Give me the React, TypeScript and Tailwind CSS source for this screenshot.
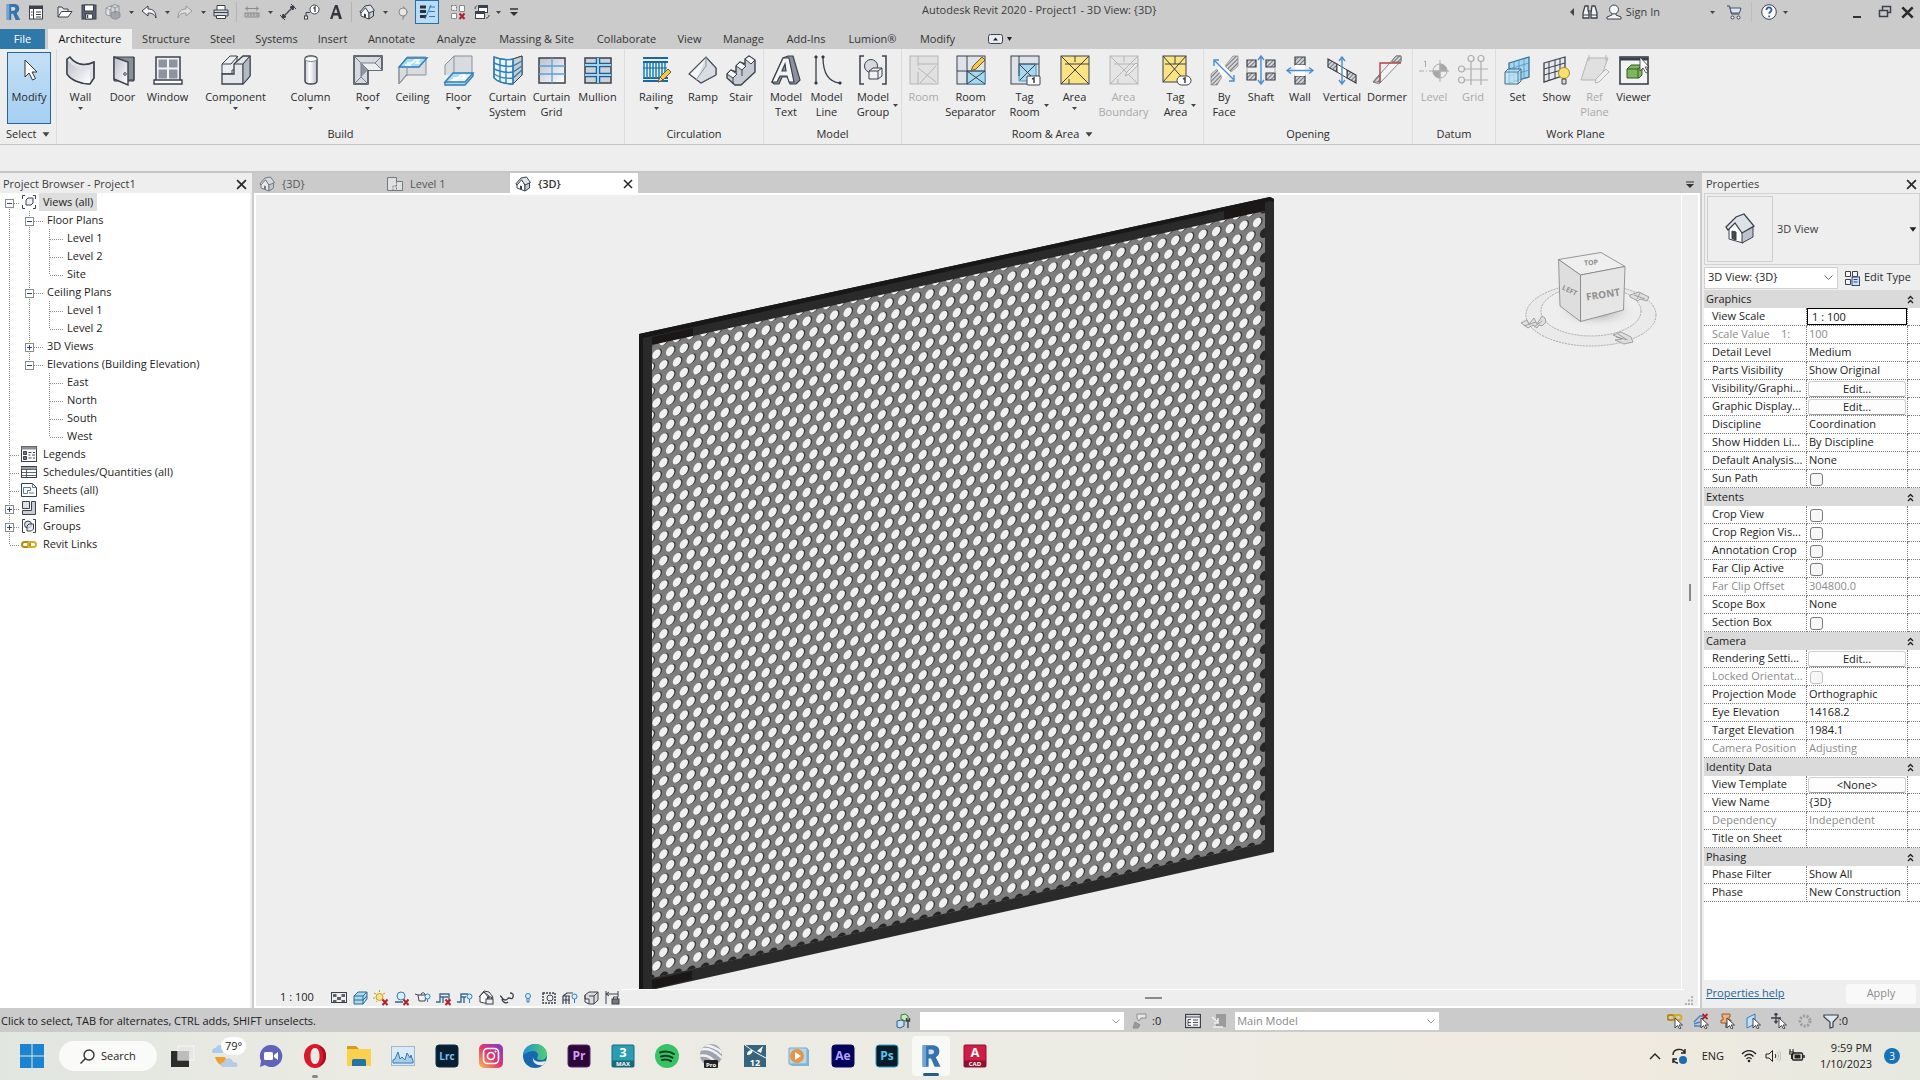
import React from "react";

type Kids = { children?: React.ReactNode };
const K = "#3b404c";
const B = "#2f7fb8";

function Ico({ s = 16, children }: Kids & { s?: number }) {
  return (
    <svg width={s} height={s} viewBox={`0 0 ${s} ${s}`} fill="none" stroke={K} strokeWidth="1" className="block shrink-0" aria-hidden="true">
      {children}
    </svg>
  );
}

function Caret({ dark }: { dark?: boolean }) {
  return (
    <svg width="8" height="5" viewBox="0 0 7 4" className="block shrink-0" aria-hidden="true">
      <path d="M0.500 0h6L3.500 4z" fill={dark ? "#222" : "#444"} />
    </svg>
  );
}

function Cross({ s = 11, w = 1.6 }: { s?: number; w?: number }) {
  return (
    <svg width={s} height={s} viewBox="0 0 10 10" className="block shrink-0" aria-hidden="true">
      <path d="M1 1l8 8M9 1l-8 8" stroke="#2b2b2b" strokeWidth={w} />
    </svg>
  );
}

/* ---------- quick access toolbar ---------- */

const redX = <path d="M9.500 9.500l5 5.500M14.500 9.500l-5 5.500" stroke="#b3202a" strokeWidth="2" />;

const house16 = (
  <>
    <path d="M2 7.500l4-4.500 4 5.500V15l-8-3z" fill="#fdfdfd" />
    <path d="M10 8l4.500-2v6L10 15z" fill="#c3c8d1" />
    <path d="M0.800 8L6 2l5.500-1 4 5.500L10 9 6.500 3.800 2 9z" fill="#dfe3ea" />
    <path d="M5 9.500v3.500l2 .8v-3.500z" fill={K} stroke="none" />
  </>
);

const qat: Record<string, React.ReactNode> = {
  list: (
    <>
      <rect x="1.500" y="2" width="13" height="13" fill="#fff" />
      <path d="M1.500 3.500h13" strokeWidth="3" />
      <path d="M5.500 5v10M8 8h5M8 10.500h5M8 13h5M3 8h1.500M3 11h1.500" />
    </>
  ),
  open: (
    <>
      <path d="M1 13V3h4l1.500 2H11v2.500" fill="#e8eaee" />
      <path d="M1 13l3.500-5.500H15L11 13z" fill="#fff" />
    </>
  ),
  save: (
    <>
      <rect x="1" y="1" width="14" height="14" fill="#596071" />
      <rect x="3.500" y="1" width="9" height="6" fill="#fff" />
      <rect x="4.500" y="10" width="7" height="5" fill="#fff" />
      <path d="M6.500 11v3" strokeWidth="1.500" />
    </>
  ),
  sync: (
    <g stroke="#85888f" strokeWidth="0.800">
      <path d="M1 4l4-2 3 1.500v7L5 12 1 10.500z" fill="#e4e5e8" />
      <path d="M6 2l4-1.500L14 2v7l-4 2-4-2z" fill="#d3d5d9" />
      <path d="M6 9l4.500-2L15 9v4l-4.500 2.500L6 13.500z" fill="#a3a6ad" />
      <path d="M6 2l4 2 4-2M10 4v6M1 4l4 2 1-.5M5 6v6" />
    </g>
  ),
  undo: <path d="M1 7l6-5v3c5 0 8 2.500 8 9-1.500-4-4-5-8-5v3z" fill="#f5f5f5" />,
  redo: <path d="M15 7L9 2v3C4 5 1 7.500 1 14c1.500-4 4-5 8-5v3z" fill="#ddd" stroke="#9a9a9a" />,
  print: (
    <>
      <path d="M4 6V1.500h8V6" fill="#fff" />
      <path d="M1 6h14v6H1z" fill="#cfd2d8" />
      <path d="M1 8.500h14" />
      <path d="M3.500 11.500h9v3h-9z" fill="#fff" />
    </>
  ),
  measure: (
    <g stroke="#8b8b8b">
      <path d="M2 4.500h12M4 2.500l-2.500 2L4 6.500M12 2.500l2.500 2-2.500 2" />
      <rect x="1" y="9" width="14" height="4" fill="#bdbdbd" />
      <path d="M4 9v3M7 9v3M10 9v3M13 9v3" />
    </g>
  ),
  dim: (
    <>
      <path d="M4 12l8-8" strokeWidth="1.300" />
      <path d="M2 14l1-4 3 3zM14 2l-1 4-3-3z" fill={K} />
      <path d="M0 11l5 5M11 0l5 5" />
    </>
  ),
  tag: (
    <>
      <circle cx="10.500" cy="5.500" r="4.500" fill="#fff" />
      <path d="M6 8.500H2v5" />
      <rect x="0.500" y="12" width="3" height="3" fill="#fff" />
      <path d="M9.500 4.500l1.500-1.500v5" strokeWidth="1.300" />
    </>
  ),
  text: (
    <path fillRule="evenodd" d="M2 15L7 1h2.500l4.500 14h-3l-1-3.500H5.500L4.500 15zM6 9h3.500L8 4z" fill="#33363d" stroke="none" />
  ),
  home: house16,
  section: (
    <g stroke="#8b8b8b">
      <path d="M8 1.500L13.500 8H8zM8 14.500L13.500 8H8z" fill="#9c9c9c" stroke="none" />
      <circle cx="8" cy="8" r="4" fill="#e6e6e6" />
      <path d="M8 12v4" />
    </g>
  ),
  thin: (
    <>
      <path d="M1 3h6M1 7.500h6M1 12.500h6" stroke="#2b2f3a" strokeWidth="3" />
      <path d="M10 3h6M10 7.500h6M10 12.500h6" stroke={B} />
      <path d="M6 15l6-14" stroke={B} />
    </>
  ),
  closeHidden: (
    <>
      <path d="M1.500 1.500h5v5h-5z" fill="#eee" stroke="#777" strokeDasharray="2 1" />
      <path d="M9.500 1.500h5v6h-5zM1.500 9.500h5v5h-5z" fill="#fff" stroke="#8a8a8a" />
      {redX}
    </>
  ),
  swap: (
    <>
      <rect x="4.500" y="1.500" width="9" height="7" fill="#fff" />
      <path d="M4.500 3h9" strokeWidth="2" />
      <rect x="1.500" y="7.500" width="9" height="7" fill="#fff" />
      <path d="M1.500 9h9" strokeWidth="2" />
      <path d="M12 14c2 0 3-1 3-3M1 5c0-2 1-3 2-3" />
    </>
  ),
};

function QBtn({ k, cls = "w-6" }: { k: string; cls?: string }) {
  return (
    <button aria-label={k} className={`flex h-6 shrink-0 items-center justify-center ${cls}`}>
      <Ico>{qat[k]}</Ico>
    </button>
  );
}

function QArrow({ cls = "w-3" }: { cls?: string }) {
  return (
    <button aria-label="More options" className={`flex h-6 shrink-0 items-center justify-center ${cls}`}>
      <svg width="5" height="3" viewBox="0 0 5 3"><path d="M0 0h5L2.500 3z" fill="#444" /></svg>
    </button>
  );
}

function RevitR({ s = 18 }: { s?: number }) {
  return (
    <svg width={s} height={s} viewBox="0 0 18 20" aria-hidden="true">
      <path d="M2 1h8c4 0 6 2 6 5 0 2.500-1.200 4-3 5l4 8h-5l-3-7H7v7H2z" fill="#3473ad" />
      <path d="M2 1h3v18H2z" fill="#6fa5d2" />
      <path d="M7 4.500h2.500c1.500 0 2 .8 2 2s-.7 2-2 2H7z" fill="#d5dde6" />
    </svg>
  );
}

function TitleBar() {
  return (
    <header className="flex h-[29px] shrink-0 items-start bg-[#cbcbcb]">
      <div className="flex w-[640px] shrink-0 items-center pl-px">
        <button aria-label="Revit" className="flex h-6 w-6 items-center justify-center"><RevitR /></button>
        <QBtn k="list" cls="w-[22px] mr-1.5" />
        <QBtn k="open" /><QBtn k="save" /><QBtn k="sync" /><QArrow />
        <QBtn k="undo" /><QArrow /><QBtn k="redo" /><QArrow /><QBtn k="print" />
        <span className="mx-[3px] h-5 w-px bg-[#b4b4b4]" />
        <QBtn k="measure" /><QArrow /><QBtn k="dim" /><QBtn k="tag" /><QBtn k="text" />
        <span className="mx-[3px] h-5 w-px bg-[#b4b4b4]" />
        <QBtn k="home" /><QArrow /><QBtn k="section" />
        <QBtn k="thin" cls="w-6 border border-[#2a6ea3] bg-[#b9dbf5] mr-[7px]" />
        <QBtn k="closeHidden" /><QBtn k="swap" /><QArrow cls="w-2" />
        <button aria-label="Customize toolbar" className="flex h-6 w-6 items-center justify-center">
          <svg width="8" height="8" viewBox="0 0 8 8"><path d="M0 1h8" stroke="#333" strokeWidth="1.500" /><path d="M0 4h8L4 8z" fill="#333" /></svg>
        </button>
      </div>
      <h1 className="ml-[282px] pt-0.5 text-[11px] leading-4 whitespace-nowrap text-[#3c3c3c]">Autodesk Revit 2020 - Project1 - 3D View: {"{3D}"}</h1>
      <div className="ml-auto flex h-6 shrink-0 items-center pr-1.5">
        <button aria-label="Collapse search" className="mr-2"><svg width="4" height="8" viewBox="0 0 4 8"><path d="M4 0v8L0 4z" fill="#444" /></svg></button>
        <button aria-label="Search" className="mr-2">
          <Ico>
            <path d="M3 2h3v4l1 3v5H1V9zM10 2h3l2 7v5H9V9z" fill="#f3f3f3" strokeWidth="1.300" />
            <path d="M7 7h2M1 11h6M9 11h6" />
          </Ico>
        </button>
        <button className="flex items-center gap-1 text-[11px] text-[#3c3c3c]">
          <Ico>
            <path d="M6 9.500v1.500l-5 2v2h14v-2l-5-2V9.500" fill="#f5f6f8" />
            <circle cx="8" cy="5.500" r="4.500" fill="#f5f6f8" />
          </Ico>
          <span>Sign In</span>
        </button>
        <span className="ml-[46px]"><QArrow /></span>
        <button aria-label="App store" className="ml-2">
          <Ico>
            <path d="M1 2h2.500l2 8h8" />
            <path d="M4 4h11l-1.500 5H5.500z" fill="#dfe6f2" stroke="#3f5478" />
            <circle cx="6.500" cy="13.500" r="1.500" fill="#fff" /><circle cx="12.500" cy="13.500" r="1.500" fill="#fff" />
          </Ico>
        </button>
        <span className="mx-[9px] h-5 w-px bg-[#bcbcbc]" />
        <button aria-label="Help">
          <Ico>
            <circle cx="8" cy="8" r="7.300" fill="#fff" />
            <path d="M5.500 6c0-3.500 5-3.500 5 0 0 1.800-2.300 1.800-2.300 3.800M8.200 11.500v1.800" stroke="#2a5cae" strokeWidth="1.800" />
          </Ico>
        </button>
        <QArrow cls="w-4" />
        <button aria-label="Minimize" className="ml-[60px] flex h-4 w-3 items-end pb-0.5"><span className="block h-0.5 w-2 bg-[#333]" /></button>
        <button aria-label="Restore" className="ml-3">
          <Ico>
            <path d="M5.500 6V2.500h8v6H11" strokeWidth="1.500" />
            <path d="M2.500 6.500h8v6h-8z" strokeWidth="1.500" />
          </Ico>
        </button>
        <button aria-label="Close" className="ml-2"><Cross s={13} w={2} /></button>
      </div>
    </header>
  );
}

/* ---------- ribbon tabs ---------- */

const tabs: [string, string][] = [
  ["Structure", "w-[68px]"], ["Steel", "w-[45px]"], ["Systems", "w-[63px]"], ["Insert", "w-[49px]"],
  ["Annotate", "w-[69px]"], ["Analyze", "w-[61px]"], ["Massing & Site", "w-[99px]"], ["Collaborate", "w-[81px]"],
  ["View", "w-[45px]"], ["Manage", "w-[63px]"], ["Add-Ins", "w-[62px]"], ["Lumion®", "w-[71px]"], ["Modify", "w-[59px]"],
];

function TabRow() {
  return (
    <nav className="flex h-5 shrink-0 bg-[#cbcbcb] text-[11px] text-[#333]">
      <button className="w-[45px] bg-[#2f78aa] text-white">File</button>
      <button className="ml-[3px] w-[84px] bg-[#efefef] text-[#111]">Architecture</button>
      {tabs.map(([t, w]) => (
        <button key={t} className={`${w} whitespace-nowrap`}>{t}</button>
      ))}
      <button aria-label="Minimize ribbon" className="ml-[21px] flex items-center gap-1">
        <svg width="15" height="10" viewBox="0 0 15 10"><rect x="0.500" y="0.500" width="14" height="9" rx="2" fill="#e7eaee" stroke={K} /><path d="M5 6.500h5L7.500 3.500z" fill="#222" /></svg>
        <svg width="5" height="4" viewBox="0 0 5 4"><path d="M0 0h5L2.500 4z" fill="#222" /></svg>
      </button>
    </nav>
  );
}

/* ---------- ribbon icons, drawn on a 32 unit grid ---------- */

const pencil = (
  <>
    <path d="M18 28l2-5 8-8 3 3-8 8z" fill="#f5c94a" stroke="#6a5a2c" />
    <path d="M18 28l2-5 3 3z" fill="#f7e3c0" stroke="#6a5a2c" />
  </>
);
const hatch = (
  <pattern id="hatch" width="3" height="3" patternUnits="userSpaceOnUse" patternTransform="rotate(45)">
    <rect width="3" height="3" fill="#d3d5d9" /><path d="M0 0v3" stroke="#50545e" strokeWidth="1.500" />
  </pattern>
);
const roomFrame = (fill: string, st: string) => (
  <g stroke={st}>
    <rect x="2" y="2" width="28" height="28" fill={fill} />
  </g>
);
const areaX = (st: string) => <path d="M2 2l28 28M30 2L2 30M16 2v6M6 10h24M10 30v-5" stroke={st} />;

const art: Record<string, React.ReactNode> = {
  wall: (
    <>
      <path d="M2 5l3-2c5 7 14 10 24 5v16l-4 6C15 30 6 26 2 20z" fill="#dfe2e7" stroke={K} />
      <path d="M2 5c5 8 12 10 23 10v15C15 30 6 26 2 20z" fill="url(#face)" stroke="none" />
      <path d="M2 5l3-2c5 7 14 10 24 5v16l-4 6C15 30 6 26 2 20z" strokeWidth="1.500" />
    </>
  ),
  door: (
    <>
      <path d="M7 3h20v24H7z" fill="#8a9098" />
      <path d="M7 3l14 5v23L7 25z" fill="url(#face)" strokeWidth="1.400" />
      <path d="M21 26h6V3" /><circle cx="18" cy="20" r="1.300" fill="#fff" />
    </>
  ),
  window: (
    <>
      <rect x="4" y="3" width="24" height="24" fill="#f2f3f5" strokeWidth="1.500" />
      <rect x="6.500" y="5.500" width="19" height="19" fill="#8e949f" stroke="none" />
      <path d="M16 5v20M6 14.500h20" stroke="#f2f3f5" strokeWidth="2" />
      <path d="M2 26h28v4H2z" fill="#fff" strokeWidth="1.400" />
    </>
  ),
  component: (
    <>
      <path d="M2 10l8-8h7v14h-5v4H2z" fill="#eceef1" />
      <path d="M2 20h12V10l9-8h7v20l-7 8H2z" fill="#e4e7eb" strokeWidth="1.300" />
      <path d="M14 10h9v20M23 10l7-8M2 10h9l7-8" />
      <path d="M23 10l7-8v20l-7 8z" fill="#b4b9c2" />
    </>
  ),
  column: (
    <>
      <path d="M10 5c0-4 12-4 12 0v22c0 4-12 4-12 0z" fill="url(#cyl)" strokeWidth="1.400" />
      <ellipse cx="16" cy="5" rx="6" ry="2.500" fill="#fff" stroke="#888" />
    </>
  ),
  roof: (
    <>
      <path d="M2 2h28v14H16v14H2z" fill="#d6d9df" strokeWidth="1.500" />
      <path d="M2 2l14 14L9 23V9z" fill="#8d93a0" stroke="none" />
      <path d="M9 9h14l7 7H16z" fill="#eceef2" stroke="none" />
      <path d="M2 2l7 7h14l7-7M9 9v14l-7 7M9 23l7 7M23 9l7 7M9 9l7 7" stroke="#777e8c" />
    </>
  ),
  ceiling: (
    <>
      <path d="M2 14l8-11h19v18H9l-7 9z" fill="#d9dbdf" stroke="#8b8f98" />
      <path d="M10 14v8M2 14v16l8-9" stroke="#8b8f98" />
      <path d="M2 13l8-9h20l-8 9z" fill="#a9dbf2" stroke={B} strokeWidth="1.400" />
      <path d="M10 9h5l3-3h4l-3 3h4M8 11h6" stroke="#fff" strokeWidth="1.500" />
    </>
  ),
  floor: (
    <>
      <path d="M2 21V11l9-9h18v17" fill="#d9dbdf" stroke="#8b8f98" />
      <path d="M11 2v17" stroke="#8b8f98" />
      <path d="M2 28l8-9h20l-8 9zM2 28v3h20l8-9v-3" fill="#a9dbf2" stroke={B} strokeWidth="1.400" />
      <path d="M10 24h5l3-3h4l-3 3h4M8 26h6" stroke="#fff" strokeWidth="1.500" />
    </>
  ),
  csys: (
    <>
      <path d="M2 3c8 3 16 3 19 2l9-3v19l-9 9C14 30 6 28 2 24z" fill="#eaf4fb" stroke={K} />
      <path d="M21 5l9-3v19l-9 9z" fill="#c9ccd3" stroke={K} />
      <path d="M2 9c7 3 14 4 19 3l9-5M2 15c7 3 14 4 19 3l9-6M2 20c7 4 14 5 19 4l9-8M8 5v22M14 6v23" stroke={B} strokeWidth="1.400" />
      <path d="M2 3c8 3 16 3 19 2v25C14 30 6 28 2 24z" stroke={B} strokeWidth="1.400" />
    </>
  ),
  cgrid: (
    <>
      <rect x="3" y="4" width="26" height="25" fill="url(#face)" strokeWidth="1.500" />
      <path d="M3 12h26M3 20h26M16 4v25" stroke="#5ba3d6" strokeWidth="1.300" />
    </>
  ),
  mullion: (
    <>
      <rect x="3" y="4" width="26" height="25" fill="#cdd2da" strokeWidth="1.500" />
      <path d="M3 11h26M3 21h26M16 4v25" stroke="#1f5f8f" strokeWidth="4.500" />
      <path d="M3 11h26M3 21h26M16 4v25" stroke="#9ed4f2" strokeWidth="2" />
    </>
  ),
  railing: (
    <>
      <path d="M3 4h25M3 8h25M3 24h25M3 27h25" stroke="#1b679f" strokeWidth="1.800" />
      <path d="M4 9v15M7 9v15M10 9v15M13 9v15M16 9v15M19 9v15M22 9v15M25 9v15" stroke="#2f8cc8" strokeWidth="1.700" />
      <path d="M3 14h24" stroke="#1b679f" />{pencil}
    </>
  ),
  ramp: (
    <>
      <path d="M2 20L19 3l10 11v7l-15 8z" fill="#f4f5f7" />
      <path d="M19 3l10 11v7l-15 8-3-5z" fill="#c7ccd4" stroke="none" opacity="0.600" />
      <path d="M2 20L19 3l10 11v7l-15 8z" stroke="#4c5260" strokeWidth="1.200" />
      <path d="M19 3v9L9 26" stroke="#8c929e" />
    </>
  ),
  stair: (
    <>
      <path d="M2 20l4-4 5 2v-6l4-4 5 2V5l4-3 6 4v12L16 31h-6l-8-7z" fill="#c6cad2" strokeWidth="1.400" />
      <path d="M2 20l4-4 6 4-4 4zM11 12l4-4 6 4-4 4zM20 5l4-3 6 4-4 4z" fill="#f6f7f8" />
      <path d="M8 24v6M17 16v6" />
    </>
  ),
  mtext: (
    <>
      <path d="M2 28L13 4l5-2h5l7 24-4 4h-6l-2-7h-6l-3 7H4z" fill="#8c929d" strokeWidth="1.200" />
      <path fillRule="evenodd" d="M2 28L13 4h6l5 24h-5l-2-6h-7l-3 6zM12 17h4l-1-7z" fill="#f4f5f7" strokeWidth="1.200" />
    </>
  ),
  mline: (
    <>
      <path d="M5 3v26M12 3c0 15 5 25 17 26" strokeWidth="1.300" />
      <path d="M4 2h2v2H4zM4 28h2v2H4zM11 2h2v2h-2zM28 28h2v2h-2z" fill="#222" />
    </>
  ),
  mgroup: (
    <>
      <path d="M7 2H3v28h4M25 2h4v28h-4" strokeWidth="1.500" />
      <circle cx="14" cy="12" r="6.500" fill="#d6dae0" />
      <path d="M12 17l4-3h9v8l-4 3h-9z" fill="#eef0f3" /><path d="M12 17h9v8M21 17l4-3" />
    </>
  ),
  room: (
    <>
      {roomFrame("#e1e1e1", "#b5b5b5")}
      <path d="M10 2v10M10 10h20M10 18v12M10 14l18 14M28 12L12 29" stroke="#b5b5b5" />
    </>
  ),
  roomsep: (
    <>
      {roomFrame("#dfe3e9", K)}
      <path d="M12 17h18v13H12z" fill="#a8d8ee" stroke="#4a97c4" />
      <path d="M12 2v28M2 17h28M12 17l18 13M30 17L12 30" />
      <path d="M16 17l2-5L27 3l3 3-9 9z" fill="#f5c94a" stroke="#6a5a2c" />
    </>
  ),
  tagroom: (
    <>
      {roomFrame("#dfe3e9", K)}
      <path d="M10 10h17v17H10z" fill="#a8d8ee" stroke="#4a97c4" />
      <path d="M10 2v20M10 10h20M11 11l15 15M26 11L11 26" />
      <rect x="18" y="22" width="13" height="9" rx="1" fill="#fff" /><path d="M23 25l2-1v5" strokeWidth="1.500" />
    </>
  ),
  area: <>{roomFrame("#fbe381", K)}{areaX(K)}</>,
  areab: (
    <>
      {roomFrame("#e4e4e4", "#b5b5b5")}{areaX("#b5b5b5")}
      <path d="M17 22l2-4 9-9 2 2-9 9z" fill="#eee" stroke="#b0b0b0" />
    </>
  ),
  tagarea: (
    <>
      <rect x="3" y="2" width="23" height="26" fill="#fbe381" />
      <path d="M3 2l23 26M26 2L3 28M15 2v8M5 10h21" />
      <rect x="17" y="22" width="14" height="9" rx="4.500" fill="#fff" /><path d="M23 25l2-1v5" strokeWidth="1.500" />
    </>
  ),
  byface: (
    <>
      <path d="M3 20l6-5 6 6-6 10H3z" fill="url(#hatch)" stroke="#777" strokeWidth="0.600" /><path d="M17 12l8-10h5v10l-7 6z" fill="url(#hatch)" stroke="#777" strokeWidth="0.600" />
      <path d="M9 15l5-6 8 9-6 7z" fill="#fff" stroke="none" />
      <path d="M6 6l20 20M6 12V6h5M21 27h5v-6" stroke="#4a8fcf" strokeWidth="1.400" />
    </>
  ),
  shaft: (
    <>
      <path d="M2 6h9v7H2zM21 6h9v7h-9zM2 19h9v7H2zM21 19h9v7h-9z" fill="url(#hatch)" strokeWidth="1.200" />
      <path d="M16 2v28M13 6l3-4 3 4M13 26l3 4 3-4" stroke="#4a8fcf" strokeWidth="1.400" />
      <path d="M2 13v6M30 13v6" stroke="#aaa" />
    </>
  ),
  wallopen: (
    <>
      <path d="M11 3h10v8H11zM11 22h10v8H11z" fill="url(#hatch)" strokeWidth="1.200" />
      <path d="M11 11v11h10V11z" fill="#fff" stroke="none" />
      <path d="M3 16.500h26M7 13.500l-4 3 4 3M25 13.500l4 3-4 3" stroke="#4a8fcf" strokeWidth="1.400" />
    </>
  ),
  vertical: (
    <>
      <path d="M2 5l9 5v8l-9-5zM21 16l9 5v8l-9-5z" fill="url(#hatch)" strokeWidth="1.200" />
      <path d="M11 10l10 6v8l-10-6z" fill="#fff" />
      <path d="M16 3v27M13 7l3-4 3 4M13 26l3 4 3-4" stroke="#4a8fcf" strokeWidth="1.400" />
    </>
  ),
  dormer: (
    <>
      <path d="M2 28L25 2h5v5L8 30z" fill="#f4f4f4" stroke="#8a8a8a" />
      <path d="M21 7l4-5h5v6h-9zM2 28l7-8v8z" fill="url(#hatch)" stroke="#777" />
      <path d="M30 9H9v20" stroke="#b0464a" strokeWidth="1.400" />
    </>
  ),
  level: (
    <g stroke="#adadad">
      <path d="M1 17h15" strokeDasharray="5 2 1 2" /><path d="M6 8l1.500-1v6" />
      <circle cx="22" cy="17" r="7" fill="#ececec" />
      <path d="M22 10v7h7a7 7 0 00-7-7zM22 17v7a7 7 0 01-7-7z" fill="#a6a6a6" /><path d="M22 6v22M16 17h15" />
    </g>
  ),
  grid: (
    <g stroke="#adadad" strokeWidth="1.200">
      <path d="M14 7v24M24 7v24M7 15h24M7 26h24" />
      <circle cx="14" cy="4.500" r="3" /><circle cx="24" cy="4.500" r="3" /><circle cx="4.500" cy="15" r="3" /><circle cx="4.500" cy="26" r="3" />
    </g>
  ),
  set: (
    <>
      <path d="M7 9l20-6v20L7 29z" fill="#a5d5ee" stroke="#33729c" strokeWidth="1.300" />
      <path d="M12 8v19M17 6v20M22 5v20M7 15l20-6M7 22l20-6" stroke="#4b93bf" strokeWidth="0.800" />
      <path d="M3 18l3-3h13v12l-3 3H3z" fill="#bfe4f6" fillOpacity="0.750" stroke="#3c6a86" />
      <path d="M3 18h13v12M16 18l3-3" stroke="#3c6a86" strokeWidth="0.800" />
    </>
  ),
  show: (
    <>
      <path d="M3 9l21-6v18L3 28z" fill="#e6e8ec" strokeWidth="1.300" />
      <path d="M8 8v18M14 6v19M19 5v18M3 15l21-6M3 21l21-6" />
      <circle cx="23" cy="19" r="5.500" fill="#fbe06b" stroke="#a58a2a" /><path d="M21 25h4v5h-4z" fill="#d9d9d9" />
    </>
  ),
  refplane: (
    <g stroke="#b5b5b5">
      <path d="M9 4h20l-8 22H2z" fill="#e0e0e0" /><path d="M10 1v6M27 1v6" />
      <path d="M16 29l1-4 10-10 3 3-10 10z" fill="#efefef" />
    </g>
  ),
  viewer: (
    <>
      <rect x="2" y="3" width="28" height="27" fill="#f3f3f3" strokeWidth="1.600" />
      <path d="M2 5h28" strokeWidth="3" />
      <path d="M9 15l4-4h11v10l-3 3H9z" fill="#7fb85c" stroke="#38562a" /><path d="M9 15h11v9M20 15l4-4" stroke="#38562a" />
      <path d="M22 3v14l3-3 3 5 2-1-3-5h4z" fill="#fff" stroke="#333" strokeWidth="0.800" />
    </>
  ),
};

type Btn = { k: string; l: string; w: string; l2?: string; a?: boolean; off?: boolean };
type Panel = { t: string; cls: string; more?: boolean; b: Btn[] };

const panels: Panel[] = [
  {
    t: "Build", cls: "w-[568px]", b: [
      { k: "wall", l: "Wall", w: "w-11", a: true }, { k: "door", l: "Door", w: "w-10" }, { k: "window", l: "Window", w: "w-[50px]" },
      { k: "component", l: "Component", w: "w-[86px]", a: true }, { k: "column", l: "Column", w: "w-16", a: true },
      { k: "roof", l: "Roof", w: "w-[50px]", a: true }, { k: "ceiling", l: "Ceiling", w: "w-10" }, { k: "floor", l: "Floor", w: "w-[52px]", a: true },
      { k: "csys", l: "Curtain", l2: "System", w: "w-[46px]" }, { k: "cgrid", l: "Curtain", l2: "Grid", w: "w-[42px]" }, { k: "mullion", l: "Mullion", w: "w-[50px]" },
    ],
  },
  { t: "Circulation", cls: "w-[139px]", b: [{ k: "railing", l: "Railing", w: "w-12", a: true }, { k: "ramp", l: "Ramp", w: "w-[46px]" }, { k: "stair", l: "Stair", w: "w-[30px]" }] },
  { t: "Model", cls: "w-[138px]", b: [{ k: "mtext", l: "Model", l2: "Text", w: "w-[42px]" }, { k: "mline", l: "Model", l2: "Line", w: "w-[39px]" }, { k: "mgroup", l: "Model", l2: "Group", w: "w-[54px]", a: true }] },
  {
    t: "Room & Area", cls: "w-[302px]", more: true, b: [
      { k: "room", l: "Room", w: "w-10", off: true }, { k: "roomsep", l: "Room", l2: "Separator", w: "w-[54px]" },
      { k: "tagroom", l: "Tag", l2: "Room", w: "w-[54px]", a: true }, { k: "area", l: "Area", w: "w-[46px]", a: true },
      { k: "areab", l: "Area", l2: "Boundary", w: "w-[52px]", off: true }, { k: "tagarea", l: "Tag", l2: "Area", w: "w-[52px]", a: true },
    ],
  },
  {
    t: "Opening", cls: "w-[209px]", b: [
      { k: "byface", l: "By", l2: "Face", w: "w-[38px]" }, { k: "shaft", l: "Shaft", w: "w-9" }, { k: "wallopen", l: "Wall", w: "w-[42px]" },
      { k: "vertical", l: "Vertical", w: "w-[42px]" }, { k: "dormer", l: "Dormer", w: "w-12" },
    ],
  },
  { t: "Datum", cls: "w-[83px]", b: [{ k: "level", l: "Level", w: "w-[38px]", off: true }, { k: "grid", l: "Grid", w: "w-10", off: true }] },
  {
    t: "Work Plane", cls: "w-[159px] border-r-0", b: [
      { k: "set", l: "Set", w: "w-10" }, { k: "show", l: "Show", w: "w-[38px]" }, { k: "refplane", l: "Ref", l2: "Plane", w: "w-[38px]", off: true }, { k: "viewer", l: "Viewer", w: "w-10" },
    ],
  },
];

function RibbonButton({ b }: { b: Btn }) {
  return (
    <button className={`flex shrink-0 flex-col items-center pt-[5px] text-[11px] leading-[15px] whitespace-nowrap ${b.w} ${b.off ? "text-[#a9a9a9]" : "text-[#2b2b2b]"}`}>
      <Ico s={32}>{art[b.k]}</Ico>
      <span className="mt-[3px] block">{b.l}</span>
      {b.l2 ? (
        <span className="relative block">
          {b.l2}
          {b.a && <span className="absolute top-0 left-full ml-1"><svg width="5" height="3" viewBox="0 0 5 3"><path d="M0 0h5L2.500 3z" fill="#444" /></svg></span>}
        </span>
      ) : (
        b.a && <span className="mt-[3px] block"><svg width="5" height="3" viewBox="0 0 5 3" className="block"><path d="M0 0h5L2.500 3z" fill="#444" /></svg></span>
      )}
    </button>
  );
}

function Ribbon() {
  return (
    <section className="flex h-24 shrink-0 border-b border-[#c4c4c4] bg-[#eeeeee] text-[11px] text-[#2b2b2b]">
      <svg width="0" height="0" className="absolute" aria-hidden="true">
        <defs>
          <linearGradient id="face" x1="0" y1="0" x2="1" y2="1"><stop offset="0" stopColor="#b9bec8" /><stop offset="1" stopColor="#ffffff" /></linearGradient>
          <linearGradient id="cyl"><stop offset="0" stopColor="#c3c7cf" /><stop offset="0.400" stopColor="#fff" /><stop offset="1" stopColor="#b5bac4" /></linearGradient>
          {hatch}
        </defs>
      </svg>
      <div className="flex w-[57px] shrink-0 flex-col border-r border-[#dcdcdc]">
        <div className="flex h-[75px] pt-[3px] pl-[7px]">
          <button className="flex w-11 flex-col items-center border border-[#2a6496] bg-[linear-gradient(#c3dff5,#a5cff2)] pt-px leading-[15px]">
            <svg width="32" height="32" viewBox="0 0 32 32" className="block"><path d="M12 6v17l4-4 3.500 7 3-1.500-3.500-6.500h5z" fill="#fff" stroke="#333" /></svg>
            <span className="mt-[3px] block">Modify</span>
          </button>
        </div>
        <button className="flex h-5 items-center gap-1.5 pl-1.5">Select <Caret /></button>
      </div>
      {panels.map((p) => (
        <div key={p.t} className={`flex shrink-0 flex-col border-r border-[#dcdcdc] ${p.cls}`}>
          <div className="flex h-[75px] justify-center">{p.b.map((b) => <RibbonButton key={b.k} b={b} />)}</div>
          <div className="flex h-5 items-center justify-center gap-1.5">{p.t}{p.more && <Caret />}</div>
        </div>
      ))}
    </section>
  );
}

/* ---------- project browser ---------- */

const treeArt: Record<string, React.ReactNode> = {
  views: (<><path d="M4 1.500H1.500V5M12 1.500h2.500V5M4 14.500H1.500V11M12 14.500h2.500V11" /><path d="M5 6l2-2h5v5l-2 2H5z" fill="#f1f2f4" /></>),
  legends: (<><rect x="0.500" y="0.500" width="15" height="15" fill="#fff" /><path d="M0.500 2h15" stroke="#8b909a" strokeWidth="3" /><path d="M2.500 5.500h3v3h-3zM2.500 10.500h3v3h-3z" fill="#777" /><path d="M7.500 6.500h3M12 6.500h2M7.500 9h2M11 9h3M7.500 12h3M12 12h2" /></>),
  sched: (<><rect x="0.500" y="2.500" width="15" height="11" fill="#fff" /><path d="M0.500 4h15" stroke="#9a9fa9" strokeWidth="2" /><path d="M0.500 5.500h15M0.500 8.500h15M0.500 11.500h15M5.500 5v9" strokeWidth="0.800" /></>),
  sheets: (<><path d="M0.500 1.500h11l4 4v9h-15z" fill="#fff" /><path d="M11.500 1.500v4h4M2.500 5.500h7v3h-3v3h-4zM8 11h5" stroke="#5c7ca0" /></>),
  families: (<><path d="M1.500 1.500h7v7h-7z" fill="#dfe2e7" /><path d="M10.500 1.500h4v13h-13v-4h9z" fill="#c9ced6" /></>),
  groups: (<><path d="M4 1.500H1.500v13H4M12 1.500h2.500v13H12" /><circle cx="7" cy="6.500" r="3.500" fill="#cfe0ea" /><path d="M6 8l2-2h4.500v5l-2 2H6z" fill="#dfe6ec" fillOpacity="0.700" /></>),
  links: (<><rect x="1" y="6" width="8" height="5" rx="2.500" stroke="#b58a10" strokeWidth="2" /><rect x="7" y="6" width="8" height="5" rx="2.500" stroke="#d8ad25" strokeWidth="2" /></>),
};

type Cell = "v" | "t" | "l" | "-" | "+" | "-top" | "-end" | " ";

function Guide({ c, first }: { c: Cell; first?: boolean }) {
  const box = c.startsWith("-") || c.startsWith("+");
  const up = !(c === "-top" || c === " ");
  const down = !(c === "l" || c === "-end" || c === " ");
  return (
    <svg width="20" height="18" viewBox="0 0 20 18" className="block shrink-0 overflow-visible" aria-hidden="true">
      <g stroke="#8c8c8c" strokeDasharray="1 1" fill="none">
        {up && <path d="M9.500 0v10" />}
        {down && <path d="M9.500 10v8" />}
        {c !== "v" && c !== " " && <path d={first ? "M10 10.500h9" : "M10 10.500h14"} />}
      </g>
      {box && (
        <>
          <rect x="5.500" y="6.500" width="8" height="8" fill="#fff" stroke="#8c8c8c" />
          <path d="M7 10.500h5" stroke="#2c4a8a" />
          {c.startsWith("+") && <path d="M9.500 8v5" stroke="#2c4a8a" />}
        </>
      )}
    </svg>
  );
}

const tree: { t: string; g: Cell[]; ic?: string; sel?: boolean }[] = [
  { t: "Views (all)", g: ["-top"], ic: "views", sel: true },
  { t: "Floor Plans", g: ["v", "-"] },
  { t: "Level 1", g: ["v", "v", "t"] }, { t: "Level 2", g: ["v", "v", "t"] }, { t: "Site", g: ["v", "v", "l"] },
  { t: "Ceiling Plans", g: ["v", "-"] },
  { t: "Level 1", g: ["v", "v", "t"] }, { t: "Level 2", g: ["v", "v", "l"] },
  { t: "3D Views", g: ["v", "+"] },
  { t: "Elevations (Building Elevation)", g: ["v", "-end"] },
  { t: "East", g: ["v", " ", "t"] }, { t: "North", g: ["v", " ", "t"] }, { t: "South", g: ["v", " ", "t"] }, { t: "West", g: ["v", " ", "l"] },
  { t: "Legends", g: ["t"], ic: "legends" }, { t: "Schedules/Quantities (all)", g: ["t"], ic: "sched" }, { t: "Sheets (all)", g: ["t"], ic: "sheets" },
  { t: "Families", g: ["+"], ic: "families" }, { t: "Groups", g: ["+"], ic: "groups" }, { t: "Revit Links", g: ["l"], ic: "links" },
];

function ProjectBrowser() {
  return (
    <aside className="flex w-[252px] shrink-0 flex-col border-r-2 border-[#eeeeee] bg-white text-[11px] text-[#1c1c1c]">
      <div className="flex h-5 shrink-0 items-center justify-between bg-[#eeeeee] pt-0.5 pr-[3px] pl-[3px]">
        <h2 className="text-[#3c3c3c]">Project Browser - Project1</h2>
        <button aria-label="Close project browser"><Cross /></button>
      </div>
      <ul>
        {tree.map((r, i) => (
          <li key={i} className="flex h-[18px] items-center whitespace-nowrap">
            {r.g.map((c, j) => <Guide key={j} c={c} first={j === 0} />)}
            {r.ic && <span className="ml-px flex"><Ico>{treeArt[r.ic]}</Ico></span>}
            <span className={`leading-[18px] ${r.ic ? "ml-0.5 px-1" : "ml-[7px]"} ${r.sel ? "bg-[#dedede]" : ""}`}>{r.t}</span>
          </li>
        ))}
      </ul>
    </aside>
  );
}

/* ---------- 3D view ---------- */

const TILT = -55;

function holePath(dark: boolean, dx: number, major: number, minor: number) {
  const cx = major * Math.cos((TILT * Math.PI) / 180);
  const cy = major * Math.sin((TILT * Math.PI) / 180);
  const f = (n: number) => n.toFixed(2);
  let d = "";
  for (let j = -1; j <= 26; j++) {
    for (let h = 0; h < 2; h++) {
      for (let i = -1; i <= 45; i++) {
        const u = 13.65 * (i + h / 2) + dx;
        const v = 24.47 * (j + h / 2);
        const edge = j + h / 2 >= 25.5 || i + h / 2 >= 44.5;
        if (edge !== dark) continue;
        const arc = `${major} ${minor} ${TILT} 1 0`;
        d += `M${f(u - cx)} ${f(v - cy)}a${arc} ${f(2 * cx)} ${f(2 * cy)}a${arc} ${f(-2 * cx)} ${f(-2 * cy)}`;
      }
    }
  }
  return d;
}
const holeShade = holePath(false, 1, 5.1, 4);
const holeLight = holePath(false, -0.2, 4.9, 3.8);
const holeEdge = holePath(true, 0.3, 5, 4.3);
const lattice = "matrix(1 -0.21927 0 1 656.7 354)";

function Model() {
  return (
    <svg viewBox="256 195 1425 794" className="block h-full w-full" aria-label="Perforated panel">
      <defs><clipPath id="sheet"><path d="M652 345L1265 211V843L652 978z" /></clipPath></defs>
      <path d="M639 334L1270 197L1274 199V852L656 989H639z" fill="#2a2a2a" />
      <path d="M639 334L1270 197L1274 199V202L1270 201L643 338V989H639z" fill="#171717" />
      <path d="M652 337L693 328V337L652 346zM652 980L692 971V979L656 988H652z" fill="#1b1717" />
      <path d="M1224 210L1265 201V211L1224 220z" fill="#1b1717" />
      <path d="M652 345L1265 211V843L652 978z" fill="#7d7d7d" />
      <g clipPath="url(#sheet)">
        <g transform={lattice}>
          <path d={holeShade} fill="#3a3a3a" />
          <path d={holeLight} fill="#f0f0f0" />
          <path d={holeEdge} fill="#262626" />
        </g>
      </g>
    </svg>
  );
}

function ViewCube() {
  return (
    <svg width="142" height="100" viewBox="1518 250 142 100" className="absolute top-[55px] right-[21px]" aria-label="View cube" fontFamily="'Open Sans', sans-serif" fontWeight="700">
      <defs><radialGradient id="glow"><stop offset="0" stopColor="#777" stopOpacity="0.800" /><stop offset="1" stopColor="#eee" stopOpacity="0" /></radialGradient></defs>
      <ellipse cx="1591" cy="315" rx="65" ry="31" fill="#eaeaea" stroke="#a8a8a8" strokeDasharray="2 1" />
      <ellipse cx="1591" cy="311" rx="50" ry="25" fill="#eeeeee" stroke="#a8a8a8" strokeDasharray="2 1" />
      <ellipse cx="1596" cy="311" rx="42" ry="17" fill="url(#glow)" />
      <path d="M1558.500 259.500L1601 252.500L1625 266.500L1580.500 275z" fill="#efefef" stroke="#808080" strokeWidth="0.800" />
      <path d="M1558.500 259.500L1580.500 275V321.500L1560 306z" fill="#dedede" stroke="#808080" strokeWidth="0.800" />
      <path d="M1580.500 275L1625 266.500L1623.500 310L1580.500 321.500z" fill="#e6e6e6" stroke="#808080" strokeWidth="0.800" />
      <g fill="#8f8f8f" textAnchor="middle">
        <text x="1603" y="298" fontSize="10" transform="rotate(-9 1603 294)">FRONT</text>
        <text x="1570" y="293" fontSize="7" transform="rotate(26 1570 290)">LEFT</text>
        <text x="1591" y="265" fontSize="7" transform="rotate(-4 1591 262)">TOP</text>
      </g>
      <g fill="#dedede" stroke="#8f8f8f" strokeWidth="0.800">
        <path d="M1521 323l6-3 2 4 5-6 3 6 5-8 3 2 1 4-4 4-3-1-2 3-4-3-5 3z" />
        <path d="M1524 326l12-4M1534 327l8-6" />
        <path d="M1613 335l8-3 10 5 2 5-9 2-9-4 7-1z" /><path d="M1616 337l12 3M1618 334l8 5" />
        <path d="M1630 295l9-3 10 5-2 4-7-2-2 2-8-4z" /><path d="M1634 295l11 4M1640 293l-3 6" />
      </g>
    </svg>
  );
}

const blueBulb = <circle cx="12.500" cy="6.500" r="2.500" fill="#d9effb" stroke={B} />;
const vcb: [string, React.ReactNode][] = [
  ["Detail level", <><rect x="0.500" y="2.500" width="15" height="10" fill="#eee" /><path d="M2 4h3.500v3H2zM6 7h4v3H6zM10.500 4H14v3h-3.500zM2 10h3.500v2H2zM10.500 10H14v2h-3.500z" fill="#5c606a" stroke="none" /></>],
  ["Visual style", <><path d="M2 6l4-4h9v7l-4 5H2z" fill="#a9dbf2" stroke="#2d6a8c" /><path d="M2 6h9v8M11 6l4-4M2 10h9l4-4" stroke="#2d6a8c" /></>],
  ["Sun path", <><circle cx="6.500" cy="7" r="3.500" fill="#fbe58a" stroke="#d29a1c" /><path d="M6.500 0v2M1 3l2 1M12 3l-2 1M0 8h2M3 12l1-1" stroke="#d29a1c" />{redX}</>],
  ["Shadows", <><circle cx="7" cy="6" r="4" fill="#d9effb" stroke={B} /><path d="M1 12h8" strokeWidth="2" stroke="#5b86a8" />{redX}</>],
  ["Rendering", <><path d="M0 4l3 1 1 6h6l1-6H3M6 5c0-3 4-3 4 0" fill="#f1f1f1" />{blueBulb}<path d="M12.500 9v3" stroke={B} /></>],
  ["Crop view", <><path d="M0 12h4V4h9v7M4 7h8M7 7v6" strokeWidth="1.400" stroke="#3c6a8e" />{redX}</>],
  ["Show crop region", <><path d="M0 12h4V4h7M4 7h5M7 7v6" strokeWidth="1.400" stroke="#3c6a8e" />{blueBulb}<path d="M12.500 9v4" stroke={B} /></>],
  ["Lock 3D view", <><path d="M2 12V6l4-4 5 4v7H6z" fill="#fff" /><path d="M1 7l5-6 5 1 4 5-1 2" /><path d="M6 2l5 6" /><rect x="8" y="9" width="7" height="5" fill="#eee" /><path d="M9.500 9V7h4v2" /></>],
  ["Temporary hide", <path d="M1 6c2 0 2 4 5 4s2-2 4-2 3 2 4-1-1-4-3-4M3 9c0 3 4 5 6 3" strokeWidth="1.300" />],
  ["Reveal hidden", <><circle cx="8" cy="6" r="2.500" fill="#d9effb" stroke={B} /><path d="M7 8.500V12h2V8.500" stroke={B} /></>],
  ["Worksharing", <><path d="M2 3h12v10H2z" strokeDasharray="2 1" strokeWidth="1.500" /><circle cx="9" cy="8" r="3" fill="#eee" /></>],
  ["View properties", <><path d="M1 6l4-3h6M1 6v8M4 6v8M7 6v8M1 6h7M1 10h7" strokeWidth="1.200" />{blueBulb}<path d="M12.500 9v4" stroke={B} /></>],
  ["Analytical model", <><path d="M2 5l4-3h9v8l-4 4H6V9H2z" fill="#dcdcdc" /><path d="M6 6h5v8M11 6l4-4M2 5v7l4 2" /></>],
  ["Constraints", <><path d="M2 1v13M14 1v6M2 4h12M5 2L2 4l3 2" /><rect x="8" y="9" width="7" height="5" fill="#777" /><path d="M9.500 9V7h4v2" /></>],
];

function ViewTab({ title, plan, active }: { title: string; plan?: boolean; active?: boolean }) {
  return (
    <div className={`flex w-32 shrink-0 items-center pt-0.5 pr-[5px] pl-[5px] ${active ? "bg-white font-semibold text-[#333]" : "text-[#555]"}`}>
      <button className="flex items-center gap-[7px]">
        <span className={active ? "" : "opacity-60"}>
          <Ico>{plan ? <><path d="M0.500 1.500h9v4h6v9h-15z" fill="#eee" /><path d="M9.500 5.500v9M6 14.500V10h3" strokeDasharray="2 1" /></> : house16}</Ico>
        </span>
        {title}
      </button>
      {active && <button aria-label="Close view" className="ml-auto"><Cross s={10} /></button>}
    </div>
  );
}

function Viewport() {
  return (
    <main className="flex min-w-0 flex-1 flex-col text-[11px]">
      <div className="flex h-5 shrink-0 items-stretch bg-[#cbcbcb]">
        <ViewTab title="{3D}" /><ViewTab title="Level 1" plan /><ViewTab title="{3D}" active />
        <button aria-label="Tab list" className="mt-0.5 mr-1.5 ml-auto flex items-center">
          <svg width="8" height="7" viewBox="0 0 8 7"><path d="M0 1h8" stroke="#333" /><path d="M0 3h8L4 7z" fill="#333" /></svg>
        </button>
      </div>
      <div className="flex min-h-0 flex-1 flex-col border-2 border-white bg-[#eeeeee]">
        <div className="flex min-h-0 flex-1">
          <div className="relative min-w-0 flex-1 overflow-hidden border-r border-white"><Model /><ViewCube /></div>
          <div className="flex w-4 shrink-0 items-center justify-center"><span className="h-[17px] w-0.5 bg-[#8a8a8a]" /></div>
        </div>
        <div className="flex h-[17px] shrink-0">
          <div className="flex w-[366px] shrink-0 items-center">
            <span className="w-[76px] pl-6 whitespace-nowrap text-[#222]">1 : 100</span>
            {vcb.map(([n, a]) => <button key={n} aria-label={n} className="flex w-[21px] shrink-0 justify-center"><Ico>{a}</Ico></button>)}
          </div>
          <div className="flex flex-1 items-center justify-center border-t border-white"><span className="h-0.5 w-[17px] bg-[#8a8a8a]" /></div>
          <svg width="10" height="10" viewBox="0 0 10 10" className="mr-1 self-end"><path d="M7 0h2v2H7zM4 3.500h2v2H4zM7 3.500h2v2H7zM1 7h2v2H1zM4 7h2v2H4zM7 7h2v2H7z" fill="#b5b5b5" /></svg>
        </div>
      </div>
    </main>
  );
}

/* ---------- properties ---------- */

type Row = { n: string; v?: string; kind?: "btn" | "chk" | "sel"; off?: boolean };
const groups: { t: string; rows: Row[] }[] = [
  {
    t: "Graphics", rows: [
      { n: "View Scale", v: "1 : 100", kind: "sel" }, { n: "Scale Value    1:", v: "100", off: true }, { n: "Detail Level", v: "Medium" },
      { n: "Parts Visibility", v: "Show Original" }, { n: "Visibility/Graphi...", v: "Edit...", kind: "btn" }, { n: "Graphic Display...", v: "Edit...", kind: "btn" },
      { n: "Discipline", v: "Coordination" }, { n: "Show Hidden Li...", v: "By Discipline" }, { n: "Default Analysis...", v: "None" }, { n: "Sun Path", kind: "chk" },
    ],
  },
  {
    t: "Extents", rows: [
      { n: "Crop View", kind: "chk" }, { n: "Crop Region Vis...", kind: "chk" }, { n: "Annotation Crop", kind: "chk" }, { n: "Far Clip Active", kind: "chk" },
      { n: "Far Clip Offset", v: "304800.0", off: true }, { n: "Scope Box", v: "None" }, { n: "Section Box", kind: "chk" },
    ],
  },
  {
    t: "Camera", rows: [
      { n: "Rendering Setti...", v: "Edit...", kind: "btn" }, { n: "Locked Orientat...", kind: "chk", off: true }, { n: "Projection Mode", v: "Orthographic" },
      { n: "Eye Elevation", v: "14168.2" }, { n: "Target Elevation", v: "1984.1" }, { n: "Camera Position", v: "Adjusting", off: true },
    ],
  },
  {
    t: "Identity Data", rows: [
      { n: "View Template", v: "<None>", kind: "btn" }, { n: "View Name", v: "{3D}" }, { n: "Dependency", v: "Independent", off: true }, { n: "Title on Sheet" },
    ],
  },
  { t: "Phasing", rows: [{ n: "Phase Filter", v: "Show All" }, { n: "Phase", v: "New Construction" }] },
];

function PropValue({ r, id }: { r: Row; id: string }) {
  if (r.kind === "btn") return <button aria-labelledby={id} className="mt-px ml-px block h-4 w-[98px] rounded-[3px] border border-[#cfcfcf] border-b-[#9f9f9f] bg-[#fdfdfd] text-center leading-[14px]">{r.v}</button>;
  if (r.kind === "chk") return <input type="checkbox" aria-labelledby={id} disabled={r.off} className={`mt-[3px] ml-[3px] block h-[13px] w-[13px] appearance-none rounded-[3px] border bg-[#f7f7f7] ${r.off ? "border-[#c4c4c4]" : "border-[#7a7a7a]"}`} />;
  if (r.kind === "sel") return <select aria-labelledby={id} className="block h-[17px] w-full appearance-none border border-black bg-white pl-1 leading-[15px]"><option>{r.v}</option></select>;
  return <span className="block pl-0.5 whitespace-nowrap">{r.v}</span>;
}

function Properties() {
  return (
    <aside className="flex w-[218px] shrink-0 flex-col border-l-2 border-[#eeeeee] bg-[#eeeeee] text-[11px] text-[#1c1c1c]">
      <div className="flex h-5 shrink-0 items-center justify-between pt-0.5 pr-[3px] pl-0.5">
        <h2 className="text-[#3c3c3c]">Properties</h2>
        <button aria-label="Close properties"><Cross /></button>
      </div>
      <button className="flex h-[72px] shrink-0 items-center border border-[#d2d2d2] pl-0.5 text-[#3c3c3c]">
        <span className="flex h-[66px] w-[66px] items-center justify-center border border-[#cfcfcf]">
          <Ico s={32}>
            <path d="M5 15l7-7 7 11v11L5 26z" fill="#fff" />
            <path d="M18 19l11-5v10l-11 6z" fill="#bcc3d0" />
            <path d="M2 14L12 4l8-3 10 12-12 7-7-10-7 7z" fill="#dce1ea" strokeWidth="1.300" />
            <path d="M8 18l4 1v8l-4-1.500z" fill="#454a55" />
          </Ico>
        </span>
        <span className="ml-1">3D View</span>
        <span className="mr-0.5 ml-auto"><Caret dark /></span>
      </button>
      <div className="flex h-[25px] shrink-0 items-center">
        <div className="relative flex h-[22px] w-[134px] items-center border border-[#d0d0d0] bg-white">
          <select aria-label="Type selector" className="h-full w-full appearance-none pl-[3px]"><option>3D View: {"{3D}"}</option></select>
          <svg width="9" height="5" viewBox="0 0 9 5" className="pointer-events-none absolute right-1"><path d="M0.500 0.500l4 4 4-4" fill="none" stroke="#666" /></svg>
        </div>
        <button className="ml-1.5 flex items-center gap-1 whitespace-nowrap text-[#2b2b2b]">
          <Ico><path d="M1.500 1.500h5v5h-5zM8.500 1.500h5v5h-5zM1.500 9.500h5v5h-5z" fill="#f5f5f5" /><rect x="8" y="7" width="7.500" height="8.500" fill="#cfe0f2" stroke="#2c4a7a" /><path d="M9.500 9.500h4M9.500 12h4" stroke="#2c4a7a" /></Ico>
          Edit Type
        </button>
      </div>
      <div className="min-h-0 flex-1 bg-white">
        <table className="w-full table-fixed border-separate border-spacing-0 leading-[16px]">
          <colgroup><col className="w-[103px]" /><col className="w-[101px]" /><col /></colgroup>
          {groups.map((g) => (
            <tbody key={g.t}>
              <tr>
                <th colSpan={3} className="h-[18px] bg-[#dadada] p-0 text-left font-normal">
                  <div className="flex items-center justify-between pr-1.5 pl-0.5">{g.t}
                    <svg width="7" height="9" viewBox="0 0 7 9" aria-hidden="true"><path d="M1 4l2.500-2.500L6 4M1 8l2.500-2.500L6 8" fill="none" stroke="#222" strokeWidth="1.400" /></svg>
                  </div>
                </th>
              </tr>
              {g.rows.map((r) => {
                const id = r.n.replace(/\W+/g, "-");
                return (
                  <tr key={r.n} className={r.off ? "text-[#8c8c8c]" : ""}>
                    <td id={id} className="h-[18px] overflow-hidden border-r border-b border-dotted border-[#7a7a7a] p-0 pl-2 align-top whitespace-pre">{r.n}</td>
                    <td className="h-[18px] border-r border-b border-dotted border-[#7a7a7a] p-0 align-top"><PropValue r={r} id={id} /></td>
                    <td className="h-[18px] border-b border-dotted border-[#7a7a7a] p-0" />
                  </tr>
                );
              })}
            </tbody>
          ))}
        </table>
      </div>
      <div className="flex h-7 shrink-0 items-center justify-between pr-1 pb-px pl-0.5">
        <a href="#help" className="text-[#23649c] underline">Properties help</a>
        <button disabled className="h-5 w-[70px] rounded-[3px] bg-[#f9f9f9] text-[#8c8c8c]">Apply</button>
      </div>
    </aside>
  );
}

/* ---------- status bar ---------- */

const cur = <path d="M8 5v10l2.500-2.500 2 3.500 1.500-1-2-3h3.500z" fill="#fff" stroke="#333" strokeWidth="0.900" />;
const statusIcons: [string, React.ReactNode][] = [
  ["Select links", <><rect x="0.500" y="2" width="7" height="5" rx="2.500" stroke="#b58a10" strokeWidth="2" /><rect x="7.500" y="2" width="7" height="5" rx="2.500" stroke="#d8ad25" strokeWidth="2" />{cur}</>],
  ["Select underlay", <><path d="M1 9l6-6h5M1 13h7M1 11l6-2" stroke="#3f86c2" strokeWidth="1.400" /><path d="M9.500 1l5 5M14.500 1l-5 5" stroke="#b3202a" strokeWidth="1.800" />{cur}</>],
  ["Select pinned", <><path d="M3 1h8v3h-1v3h2v3H2V7h2V4H3z" fill="#eeb27e" stroke="#a05a22" /><path d="M7 10v5" />{cur}</>],
  ["Select by face", <><path d="M2 5l8-4v10l-8 4z" fill="#bfe0f5" stroke={B} />{cur}</>],
  ["Drag elements", <><path d="M5 0v10M0 5h10M3.500 2L5 0l1.500 2M3.500 8L5 10l1.500-2" strokeWidth="1.300" />{cur}</>],
  ["Background processes", <circle cx="8" cy="8" r="5" stroke="#9c9c9c" strokeWidth="3" strokeDasharray="2 1.500" />],
];

function StatusSelect({ label, value }: { label: string; value: string }) {
  return (
    <div className="relative flex h-[18px] w-[204px] items-center bg-white">
      <select aria-label={label} className="h-full w-full appearance-none pl-0.5 text-[#888]"><option>{value}</option></select>
      <svg width="8" height="5" viewBox="0 0 8 5" className="pointer-events-none absolute right-1"><path d="M0.500 0.500l3.500 3.500 3.500-3.500" fill="none" stroke="#999" /></svg>
    </div>
  );
}

function StatusBar() {
  return (
    <footer className="flex h-6 shrink-0 items-center bg-[#cbcbcb] pt-0.5 text-[11px] whitespace-nowrap text-[#1c1c1c]">
      <p className="w-[896px] pl-px">Click to select, TAB for alternates, CTRL adds, SHIFT unselects.</p>
      <button aria-label="Worksets"><Ico><path d="M5 2l4-1 3 2v4l-3 1-4-2z" fill="#cdebb0" stroke="#3c7a3c" /><path d="M1 8l4-1 3 1v5l-4 2-3-1z" fill="#bfe0f5" stroke="#2d5f86" /><path d="M12 7v8M10.500 5v3h3V5" strokeWidth="1.300" /></Ico></button>
      <div className="ml-2"><StatusSelect label="Active workset" value="" /></div>
      <button className="ml-2 flex items-center gap-1"><Ico><path d="M5 1h9v4H9l-2 3-2-3z" fill="#e6e6e6" stroke="#8e8e8e" /><path d="M1 15l2-6 5 3-2 3z" fill="#9a9a9a" stroke="#8e8e8e" /></Ico>:0</button>
      <button aria-label="Design options" className="ml-6"><Ico><rect x="0.500" y="1.500" width="15" height="13" fill="#f4f4f4" strokeWidth="1.300" /><path d="M0.500 4h15" /><path d="M3 6.500h3M3 6.500v6M3 9.500h3M3 12.500h3M8 7h5M8 9.500h5M8 12h5" strokeWidth="0.900" /></Ico></button>
      <button aria-label="Add to set" className="ml-2.5"><Ico><rect x="5" y="1" width="10" height="13" fill="#9b9b9b" stroke="none" /><path d="M1 4l6 5M7 5v5H3M2 14h10" stroke="#f2f2f2" strokeWidth="1.500" /></Ico></button>
      <div className="ml-2"><StatusSelect label="Design option" value="Main Model" /></div>
      <div className="mr-[72px] ml-auto flex items-center gap-2.5">
        {statusIcons.map(([n, a]) => <button key={n} aria-label={n}><Ico>{a}</Ico></button>)}
        <button className="flex items-center"><Ico><path d="M1 2h14v2l-5 5v5l-3 1V9L1 4z" fill="#dfe8ef" strokeWidth="1.200" /></Ico><span>:0</span></button>
      </div>
    </footer>
  );
}

/* ---------- taskbar ---------- */

function Tile({ bg, fg, border, text, sub }: { bg: string; fg: string; border: string; text: string; sub?: string }) {
  return (
    <svg width="24" height="24" viewBox="0 0 24 24" fontFamily="'Open Sans', sans-serif" fontWeight="700" textAnchor="middle">
      <rect x="1" y="1" width="22" height="22" rx={sub ? 1 : 3} fill={bg} stroke={border} />
      {sub && <path d="M1 16.500h22V23H1z" fill={border} />}
      <text x="12" y={sub ? 13 : 16} fontSize={sub ? 13 : text.length > 2 ? 10 : 12} fill={fg}>{text}</text>
      {sub && <text x="12" y="22" fontSize="6" fill="#fff">{sub}</text>}
    </svg>
  );
}

function App24({ children }: Kids) {
  return <svg width="24" height="24" viewBox="0 0 24 24" fill="none" aria-hidden="true">{children}</svg>;
}

const apps: { n: string; el: React.ReactNode; dot?: boolean; on?: boolean }[] = [
  { n: "Task view", el: <App24><rect x="0" y="7" width="18" height="16" fill="#2c2c2c" /><rect x="7" y="2" width="16" height="14" fill="#e6e6e6" stroke="#f8f8f8" /><path d="M7 7h11v9H7z" fill="#bdbdbd" /></App24> },
  {
    n: "Weather", el: (
      <div className="relative h-[34px] w-8">
        <svg width="32" height="34" viewBox="0 0 32 34"><path d="M1 13c0-4 3-4 4-4 1-4 6-4 7 0v5H2z" fill="#a9cdf0" /><path d="M4 18c3 11 16 13 22 6-8 0-10-2-12-6z" fill="#f0a02c" /><path d="M12 28c-3 0-3-5 1-5 1-5 8-5 9 0 5-1 6 5 2 5z" fill="#b9cbe4" /></svg>
        <span className="absolute -top-0.5 left-2.5 rounded-full bg-white px-1 text-[11px] leading-[18px] text-[#222]">79°</span>
      </div>
    ),
  },
  { n: "Chat", el: <App24><path d="M12 1a11 11 0 11-6 20l-5 2 1-6A11 11 0 0112 1z" fill="#6163b8" /><rect x="5" y="8" width="9" height="8" rx="1.500" fill="#fff" /><path d="M15 11l4-3v8l-4-3z" fill="#fff" /></App24> },
  { n: "Opera", dot: true, el: <App24><path fillRule="evenodd" d="M12 0a11 12 0 100 24 11 12 0 000-24zm0 4c3 0 4.500 3.500 4.500 8S15 20 12 20s-4.500-3.500-4.500-8S9 4 12 4z" fill="#d8192c" /><path d="M16 3c6 3 6 15 0 18 4 1 7-4 7-9s-3-10-7-9z" fill="#a50f1f" /></App24> },
  { n: "File Explorer", el: <App24><path d="M0 2h9l3 3H0z" fill="#d79b1e" /><path d="M0 5h24v17H0z" fill="#fbd04e" /><path d="M5 22v-5c0-1.500 1-2 2-2h10c1 0 2 .5 2 2v5z" fill="#2273a8" /></App24> },
  { n: "Performance", el: <App24><rect x="0.500" y="2.500" width="23" height="19" fill="#dbeaf6" stroke="#9fb9cd" /><path d="M2 19v-3l2-1 3-7 2 7 2-2 3 3 2-7 3 5 1-3 2 6v2z" fill="#a9cfe8" stroke="#2d7cb8" /></App24> },
  { n: "Lightroom", el: <Tile bg="#071f33" fg="#7cc0ef" border="#0c2b44" text="Lrc" /> },
  { n: "Instagram", el: <App24><defs><linearGradient id="ig" x1="0" y1="1" x2="1" y2="0"><stop offset="0" stopColor="#fdc04c" /><stop offset="0.500" stopColor="#e0356f" /><stop offset="1" stopColor="#7b3bd0" /></linearGradient></defs><rect width="24" height="24" rx="5" fill="url(#ig)" /><rect x="4.500" y="4.500" width="15" height="15" rx="4" stroke="#fff" strokeWidth="1.600" /><circle cx="12" cy="12" r="3.500" stroke="#fff" strokeWidth="1.600" /><circle cx="16.500" cy="7.500" r="1" fill="#fff" /></App24> },
  { n: "Edge", el: <App24><defs><linearGradient id="edge" x1="0" y1="0" x2="1" y2="0"><stop offset="0" stopColor="#1c93d2" /><stop offset="1" stopColor="#52cf6e" /></linearGradient></defs><circle cx="12" cy="12" r="12" fill="#1667ae" /><path d="M0 11C1 4 6 0 12 0c7 0 12 5 12 10 0 4-3 6-6 6s-4-1-4-2c0-.8 1-1 1-3 0-2-2-4-5-4-5 0-9 4-10 4z" fill="url(#edge)" /><path d="M10 13c0 4 5 6 13 4-1 2-2 3-3 4-6 1-11-2-10-8z" fill="#ebebe5" /></App24> },
  { n: "Premiere", el: <Tile bg="#2b0638" fg="#d79bf5" border="#5b2470" text="Pr" /> },
  { n: "3ds Max", el: <Tile bg="#2b9db3" fg="#fff" border="#19697c" text="3" sub="MAX" /> },
  { n: "Spotify", el: <App24><circle cx="12" cy="12" r="12" fill="#35c365" /><path d="M5 8.500c5-1.500 10-1 14 1.500M6 12.500c4-1.200 8-.8 11.500 1.200M7 16c3-1 6-.5 9 1" stroke="#143c22" strokeWidth="2" strokeLinecap="round" /></App24> },
  { n: "Earth Pro", el: <App24><defs><clipPath id="globe"><circle cx="12" cy="11" r="11" /></clipPath></defs><circle cx="12" cy="11" r="11" fill="#9ea3b0" /><g clipPath="url(#globe)"><path d="M0 6c9-3 16 1 24 9M3 1c8 0 15 3 20 8M0 12c7-2 12 1 18 8" stroke="#f1f1f3" strokeWidth="2.500" /></g><rect x="5" y="16" width="14" height="8" rx="1" fill="#222" /><text x="12" y="22.500" fontSize="6" fill="#fff" textAnchor="middle" fontFamily="'Open Sans', sans-serif" fontWeight="700">Pro</text></App24> },
  { n: "Lumion 12", el: <App24><rect x="1" y="1" width="22" height="22" fill="#35647c" /><path d="M2 1c6 5 13 9 21 13" stroke="#fff" /><path d="M4 11c0-4 3-5 6-5-1 4-3 5-6 5zM14 7l6-5-2 7z" fill="#fff" /><text x="12" y="21.500" fontSize="9" fill="#fff" textAnchor="middle" fontFamily="'Open Sans', sans-serif" fontWeight="700">12</text></App24> },
  { n: "Media Player", el: <App24><path d="M2 4h18v16H2z" fill="#b5d8ee" stroke="#79a9c8" /><path d="M20 4l2 2v16H5l-3-2h18z" fill="#7fb4d4" /><circle cx="10" cy="12" r="7" fill="#e4954a" /><path d="M8 8l6 4-6 4z" fill="#fff" /></App24> },
  { n: "After Effects", el: <Tile bg="#00005b" fg="#b3a6ff" border="#0b0b55" text="Ae" /> },
  { n: "Photoshop", el: <Tile bg="#071c2b" fg="#5cc4e8" border="#2da4c9" text="Ps" /> },
  { n: "Revit", on: true, el: <RevitR s={24} /> },
  { n: "AutoCAD", el: <Tile bg="#cf1d46" fg="#fff" border="#8e1230" text="A" sub="CAD" /> },
];

function Taskbar() {
  return (
    <footer className="flex h-12 shrink-0 items-center bg-[linear-gradient(90deg,#e1e6e0,#ebebe3_20%,#edece4_60%,#f0eae0_85%,#e6e9e0)] pl-2.5 text-[11px] text-[#222]">
      <button aria-label="Start" className="flex w-11 justify-center">
        <App24><path d="M0 0h11.500v11.500H0zM12.500 0H24v11.500H12.500zM0 12.500h11.500V24H0zM12.500 12.500H24V24H12.500z" fill="#1c84cf" /></App24>
      </button>
      <button className="mr-1 ml-[5px] flex h-[30px] w-[98px] items-center gap-1.5 rounded-full bg-[#fafaf8] pl-[21px]">
        <svg width="15" height="15" viewBox="0 0 15 15" fill="none" stroke="#333" strokeWidth="1.400"><circle cx="9" cy="6" r="5" /><path d="M5.500 9.500l-5 5" /></svg>
        <span className="text-[11px]">Search</span>
      </button>
      {apps.map((a) => (
        <button key={a.n} aria-label={a.n} className="flex h-12 w-11 shrink-0 items-center justify-center">
          <span className={`relative flex h-10 w-[38px] items-center justify-center rounded ${a.on ? "bg-[#f8f8f5]" : ""}`}>
            {a.el}
            {a.dot && <span className="absolute -bottom-0.5 h-[3px] w-1.5 rounded-full bg-[#888]" />}
            {a.on && <span className="absolute bottom-0 h-[3px] w-4 rounded-full bg-[#22608c]" />}
          </span>
        </button>
      ))}
      <div className="mr-5 ml-auto flex items-center">
        <button aria-label="Show hidden icons"><svg width="12" height="8" viewBox="0 0 12 8"><path d="M1 7l5-5 5 5" fill="none" stroke="#222" strokeWidth="1.400" /></svg></button>
        <button aria-label="Sync" className="ml-2.5"><Ico><path d="M2 7c0-6 9-8 12-2M14 1v4h-4M2 15v-4h4M2 11c1 3 3 4 5 4" strokeWidth="1.400" stroke="#222" /><circle cx="12" cy="12" r="4" fill="#1b6fb0" stroke="none" /></Ico></button>
        <button className="ml-3.5 w-6 text-[11px]">ENG</button>
        <button aria-label="Network, sound and battery" className="ml-4 flex items-center gap-2">
          <Ico><path d="M1 6c4-4.500 10-4.500 14 0M3.500 8.500c3-3 6-3 9 0M5.500 11c1.500-1.800 3.500-1.800 5 0" stroke="#222" strokeWidth="1.300" /><circle cx="8" cy="13" r="1.300" fill="#222" stroke="none" /></Ico>
          <Ico><path d="M1 6h3l3.500-3.500v11L4 10H1z" stroke="#222" /><path d="M10 6c1 1 1 3 0 4" stroke="#222" /><path d="M12 4c2 2 2 6 0 8M14 2.500c2.500 3 2.500 8 0 11" stroke="#bbb" /></Ico>
          <Ico><rect x="3.500" y="5" width="10" height="7" rx="1" stroke="#222" strokeWidth="1.300" /><path d="M5.500 6.500h6v4h-6z" fill="#222" stroke="none" /><path d="M15 7v3" stroke="#222" strokeWidth="1.500" /><path d="M1 1v3M4 1v3M0 4h5v2H0zM2.500 6v5" stroke="#222" /></Ico>
        </button>
        <button className="ml-[15px] text-right leading-4">
          <span className="block">9:59 PM</span><span className="block">1/10/2023</span>
        </button>
        <span className="ml-3 flex h-4 w-4 items-center justify-center rounded-full bg-[#1673b8] text-[10px] leading-none text-white">3</span>
      </div>
    </footer>
  );
}

export default function App() {
  return (
    <div className="flex h-screen min-h-0 w-full flex-col overflow-hidden bg-[#cbcbcb] font-['Open_Sans','Noto_Sans',sans-serif]">
      <TitleBar />
      <TabRow />
      <Ribbon />
      <div className="h-7 shrink-0 border-b-2 border-[#c6c6c6] bg-[#eeeeee]" />
      <div className="flex min-h-0 flex-1">
        <ProjectBrowser />
        <div className="w-0.5 shrink-0 bg-[#cbcbcb]" />
        <Viewport />
        <div className="w-0.5 shrink-0 bg-[#cbcbcb]" />
        <Properties />
      </div>
      <StatusBar />
      <Taskbar />
    </div>
  );
}
